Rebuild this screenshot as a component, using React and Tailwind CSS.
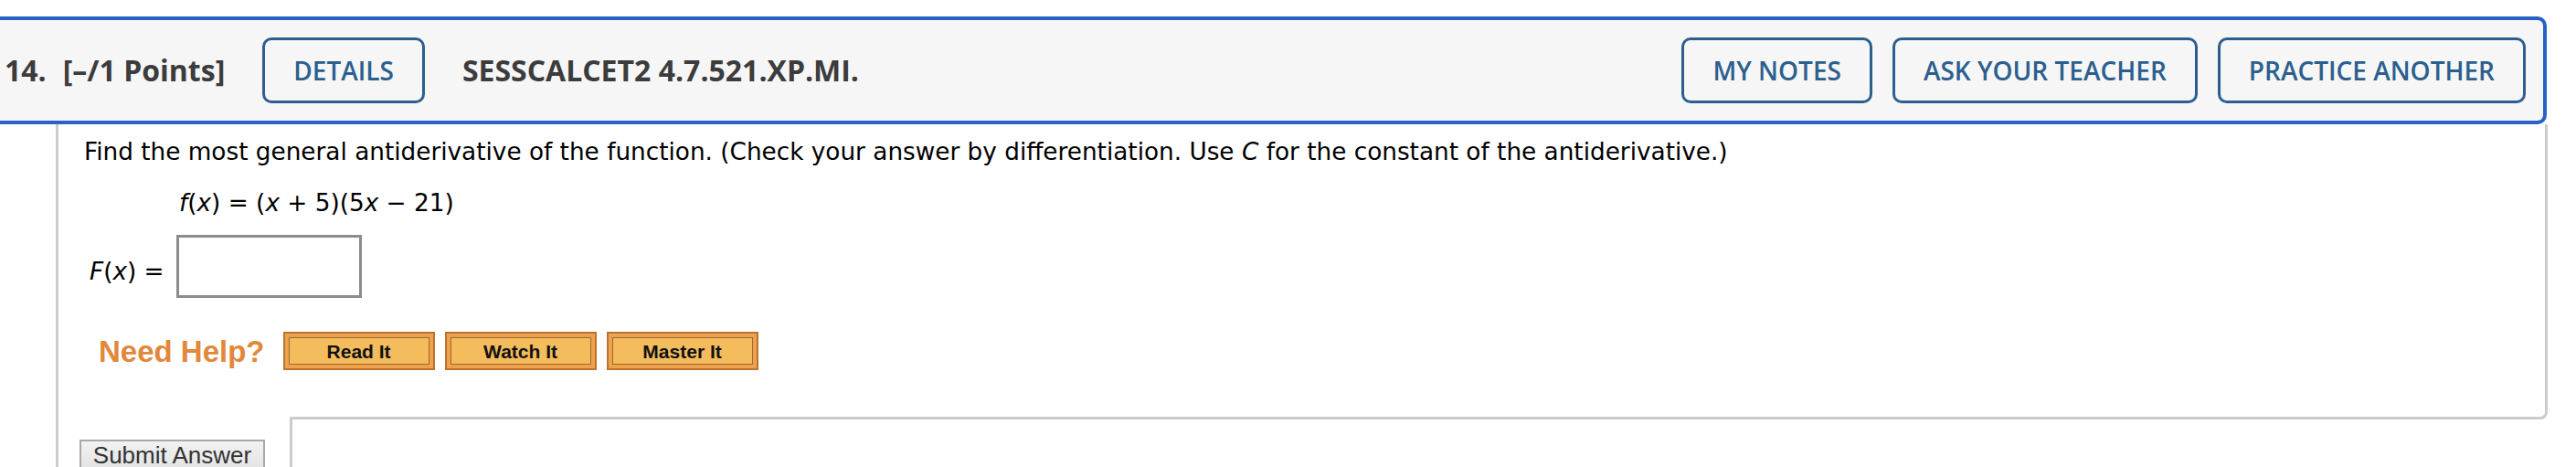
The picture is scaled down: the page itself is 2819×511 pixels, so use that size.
import React from 'react';

const HeaderButton = ({ children }) => (
  <button className="h-[72px] px-[31px] border-[3px] border-[#2c5f8f] rounded-[10px] text-[#2c5f8f] text-[28px] font-semibold leading-none bg-transparent">
    {children}
  </button>
);

const HelpButton = ({ children }) => (
  <div className="w-[166px] h-[42px] border-2 border-[#b9752f] bg-[#eda24b] p-[4px]">
    <div className="w-full h-full border border-[#9c6a33] bg-[#f4bc5c] flex items-center justify-center text-[21px] font-bold text-[#111] leading-none font-['Liberation_Sans',Arial,sans-serif]">
      {children}
    </div>
  </div>
);

export default function App() {
  return (
    <div className="bg-white min-h-screen pt-[18px] font-['DejaVu_Sans',Verdana,sans-serif] text-black">
      {/* question header */}
      <div className="w-[2787px] h-[118px] bg-[#f6f6f6] border-y-4 border-r-4 border-[#2862c4] rounded-r-[10px] flex items-center justify-between pl-[5px] pr-[19px] font-['Open_Sans',sans-serif]">
        <div className="flex items-center text-[32px] font-bold text-[#3c3c3c] leading-none">
          <span>14.</span>
          <span className="ml-[18px]">[–/1 Points]</span>
          <div className="ml-[41px]">
            <HeaderButton>DETAILS</HeaderButton>
          </div>
          <span className="ml-[41px]">SESSCALCET2 4.7.521.XP.MI.</span>
        </div>
        <div className="flex items-center gap-[22px]">
          <HeaderButton>MY NOTES</HeaderButton>
          <HeaderButton>ASK YOUR TEACHER</HeaderButton>
          <HeaderButton>PRACTICE ANOTHER</HeaderButton>
        </div>
      </div>

      {/* question body */}
      <div className="ml-[61px] w-[2727px] border-l-[3px] border-[#cccccc]">
        <div className="border-r-[3px] border-[#cccccc] pt-[15px] pl-[28px] h-[312px] text-[26.3px] leading-[31px]">
          <p>
            Find the most general antiderivative of the function. (Check your answer by differentiation. Use <i>C</i> for the constant of the antiderivative.)
          </p>
          <p className="mt-[25px] pl-[104px]">
            <i>f</i>(<i>x</i>) = (<i>x</i> + 5)(5<i>x</i> − 21)
          </p>
          <div className="mt-[19px] flex items-center pl-[6px]">
            <span className="pt-[11px]">
              <i>F</i>(<i>x</i>) =
            </span>
            <div className="ml-[13px] w-[203px] h-[69px] border-[3px] border-[#8c8c8c] bg-white"></div>
          </div>
          <div className="mt-[37px] flex items-center pl-[16px]">
            <span className="text-[33px] font-bold leading-none text-[#e2883a] font-['Liberation_Sans',Arial,sans-serif]">
              Need Help?
            </span>
            <div className="ml-[20px] flex gap-[11px]">
              <HelpButton>Read It</HelpButton>
              <HelpButton>Watch It</HelpButton>
              <HelpButton>Master It</HelpButton>
            </div>
          </div>
        </div>
        <div className="flex">
          <div className="w-[253px]"></div>
          <div className="flex-1 h-[11px] border-b-[3px] border-r-[3px] border-[#cccccc] rounded-br-[8px]"></div>
        </div>
        <div className="flex">
          <div className="w-[253px] pt-[22px] pl-[23px]">
            <button className="w-[203px] h-[44px] border-2 border-[#a9a9a9] bg-gradient-to-b from-[#f2f2f2] to-[#dedede] flex items-start justify-center pt-[2px] text-[26px] text-[#333] leading-none font-['Liberation_Sans',Arial,sans-serif]">
              Submit Answer
            </button>
          </div>
          <div className="flex-1 h-[80px] border-l-[3px] border-[#cccccc]"></div>
        </div>
      </div>
    </div>
  );
}
